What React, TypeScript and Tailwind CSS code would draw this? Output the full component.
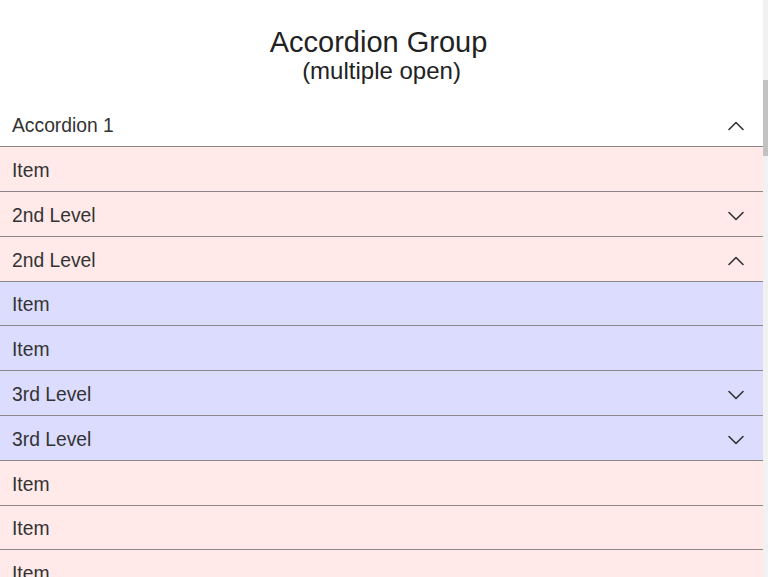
import { ChevronDown, ChevronUp } from "lucide-react";

type Row = { label: string; tone: "white" | "pink" | "blue"; chevron?: "up" | "down" };

const rows: Row[] = [
  { label: "Accordion 1", tone: "white", chevron: "up" },
  { label: "Item", tone: "pink" },
  { label: "2nd Level", tone: "pink", chevron: "down" },
  { label: "2nd Level", tone: "pink", chevron: "up" },
  { label: "Item", tone: "blue" },
  { label: "Item", tone: "blue" },
  { label: "3rd Level", tone: "blue", chevron: "down" },
  { label: "3rd Level", tone: "blue", chevron: "down" },
  { label: "Item", tone: "pink" },
  { label: "Item", tone: "pink" },
  { label: "Item", tone: "pink" },
];

const toneClass = {
  white: "bg-white",
  pink: "bg-[#ffe9e9]",
  blue: "bg-[#dcdcff]",
};

function AccordionRow({ row }: { row: Row }) {
  return (
    <div
      className={`flex h-[44.8px] shrink-0 items-center justify-between border-b border-[#8c8686] pl-3 pr-[13px] pt-[4px] ${toneClass[row.tone]}`}
    >
      <span className="text-[19.3px] leading-[24px] text-[#333]">{row.label}</span>
      {row.chevron === "up" && <ChevronUp className="h-[28px] w-[28px] text-[#333]" strokeWidth={1.4} />}
      {row.chevron === "down" && <ChevronDown className="h-[28px] w-[28px] text-[#333]" strokeWidth={1.4} />}
    </div>
  );
}

export default function App() {
  return (
    <div
      className="flex h-[577px] w-[768px] overflow-hidden bg-white"
      style={{ fontFamily: '"Liberation Sans", Arial, sans-serif' }}
    >
      <div className="flex min-w-0 flex-1 flex-col">
        <div className="flex h-[102.4px] shrink-0 flex-col items-center pt-[25px] text-[#222]">
          <h1 className="pr-[6px] text-[29px] leading-[34px]">Accordion Group</h1>
          <p className="text-[24px] leading-[24px]">(multiple open)</p>
        </div>
        {rows.map((row, i) => (
          <AccordionRow key={i} row={row} />
        ))}
      </div>
      <div className="flex w-[5px] shrink-0 flex-col bg-[#f1f1f1]">
        <div className="h-[80px]" />
        <div className="h-[76px] bg-[#c2c2c2]" />
      </div>
    </div>
  );
}
